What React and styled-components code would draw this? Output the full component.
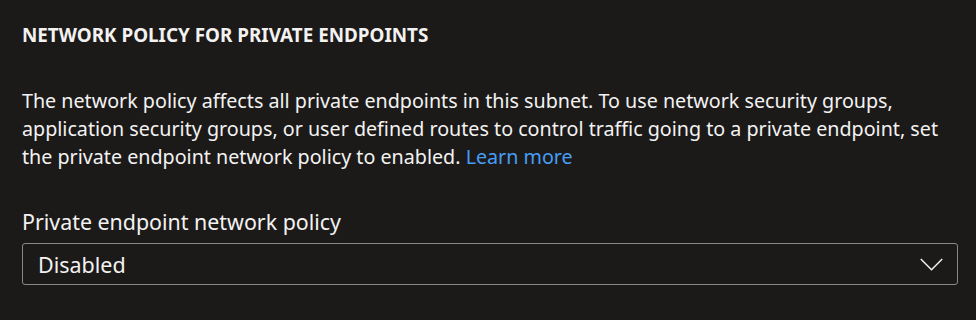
import React from "react";
import styled, { createGlobalStyle } from "styled-components";

const Global = createGlobalStyle`
  html, body { margin: 0; padding: 0; background: #1b1a19; }
  body { font-family: "Noto Sans", "Open Sans", sans-serif; color: #f3f2f1; }
`;

const Page = styled.div`
  width: 976px;
  height: 320px;
  box-sizing: border-box;
  padding: 23px 18px 0 22px;
  display: flex;
  flex-direction: column;
`;

const Heading = styled.h2`
  margin: 0;
  font-size: 18.85px;
  font-weight: 700;
  line-height: 24px;
  text-transform: uppercase;
`;

const Description = styled.p`
  margin: 40px 0 0;
  font-size: 19.7px;
  line-height: 28px;
`;

const Link = styled.a`
  color: #479ef5;
  text-decoration: none;
`;

const Field = styled.div`
  margin-top: 37px;
  display: flex;
  flex-direction: column;
  gap: 7px;
`;

const Label = styled.label`
  font-size: 21.4px;
  line-height: 28px;
`;

const Select = styled.div`
  box-sizing: border-box;
  height: 42px;
  border: 1px solid #8a8886;
  border-radius: 3px;
  display: flex;
  align-items: center;
  justify-content: space-between;
  padding: 0 14px 0 15px;
  font-size: 21.5px;
`;

const Chevron = () => (
  <svg width="23" height="13" viewBox="0 0 23 13" fill="none">
    <path d="M0.8 1 L11.5 11.8 L22.2 1" stroke="#f3f2f1" strokeWidth="1.5" />
  </svg>
);

export default function App() {
  return (
    <>
      <Global />
      <Page>
        <Heading>Network policy for private endpoints</Heading>
        <Description>
          The network policy affects all private endpoints in this subnet. To use network security groups,
          application security groups, or user defined routes to control traffic going to a private endpoint, set
          the private endpoint network policy to enabled. <Link href="#">Learn more</Link>
        </Description>
        <Field>
          <Label>Private endpoint network policy</Label>
          <Select>
            <span>Disabled</span>
            <Chevron />
          </Select>
        </Field>
      </Page>
    </>
  );
}
